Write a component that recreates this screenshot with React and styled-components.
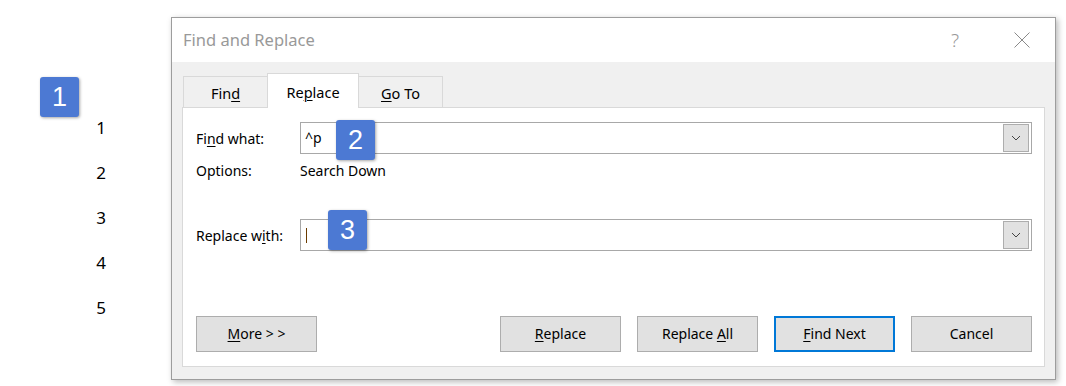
import * as React from 'react'
import styled, { createGlobalStyle } from 'styled-components'

const Global = createGlobalStyle`
  html, body {
    margin: 0;
    padding: 0;
    background: #fff;
  }
  body {
    font-family: 'Noto Sans', 'Open Sans', sans-serif;
    color: #000;
  }
`

const Page = styled.div`
  display: flex;
  align-items: flex-start;
  width: 1066px;
  height: 386px;
  padding-top: 17px;
  box-sizing: border-box;
  overflow: hidden;
`

const LeftCol = styled.div`
  position: relative;
  width: 171px;
  flex: none;
  height: 340px;
`

const Badge = styled.div`
  position: absolute;
  left: ${({ x }) => x}px;
  top: ${({ y }) => y}px;
  width: 39px;
  height: 40px;
  border-radius: 3px;
  background: #4c79d3;
  box-shadow: 1px 1px 3px rgba(0, 0, 0, 0.35);
  color: #fff;
  font-family: 'Liberation Sans', Arial, sans-serif;
  font-size: 27px;
  line-height: 40px;
  text-align: center;
  z-index: 2;
`

const NumList = styled.div`
  display: flex;
  flex-direction: column;
  margin: 89px 0 0 92px;
  width: 18px;
`

const Num = styled.div`
  height: 45px;
  line-height: 44px;
  text-align: center;
  font-size: 17px;
`

const Dialog = styled.div`
  width: 885px;
  height: 363px;
  box-sizing: border-box;
  border: 1px solid #9d9d9d;
  box-shadow: 2px 2px 6px rgba(0, 0, 0, 0.28);
  display: flex;
  flex-direction: column;
  background: #f0f0f0;
`

const TitleBar = styled.div`
  height: 44px;
  flex: none;
  background: #fff;
  display: flex;
  align-items: center;
  padding-left: 11px;
`

const Title = styled.div`
  flex: 1;
  font-size: 16.5px;
  color: #999;
  padding-bottom: 2px;
`

const Help = styled.div`
  width: 20px;
  text-align: center;
  color: #999;
  font-size: 19px;
  font-weight: 300;
  margin-right: 49px;
`

const Close = styled.div`
  width: 16px;
  height: 16px;
  margin-right: 25px;
  display: flex;
`

const Body = styled.div`
  flex: 1;
  display: flex;
  flex-direction: column;
  padding: 11px 10px 12px 10px;
`

const TabStrip = styled.div`
  display: flex;
  align-items: flex-end;
  padding-left: 1px;
  height: 35px;
  position: relative;
  z-index: 1;
  margin-bottom: -1px;
`

const Tab = styled.div`
  width: ${({ w }) => w}px;
  height: ${({ active }) => (active ? 35 : 32)}px;
  box-sizing: border-box;
  border: 1px solid #d9d9d9;
  border-bottom: ${({ active }) => (active ? 'none' : '1px solid #d9d9d9')};
  margin-left: ${({ active }) => (active ? '-1px' : '0')};
  margin-right: ${({ active }) => (active ? '-1px' : '0')};
  background: ${({ active }) => (active ? '#fff' : '#f0f0f0')};
  display: flex;
  align-items: center;
  justify-content: center;
  font-size: 14.5px;
  padding-top: 1px;
  position: relative;
  z-index: ${({ active }) => (active ? 2 : 1)};
`

const Panel = styled.div`
  flex: 1;
  background: #fff;
  border: 1px solid #d9d9d9;
  display: flex;
  flex-direction: column;
  padding: 14px 12px 14px 13px;
`

const Row = styled.div`
  display: flex;
  align-items: center;
  height: ${({ h }) => h}px;
  margin-top: ${({ mt }) => mt || 0}px;
`

const Label = styled.div`
  width: 104px;
  flex: none;
  font-size: 14px;
`

const Value = styled.div`
  font-size: 14px;
`

const Combo = styled.div`
  position: relative;
  flex: 1;
  height: 32px;
  box-sizing: border-box;
  border: 1px solid #a8a8a8;
  display: flex;
  align-items: center;
  padding: 0 2px 0 4px;
`

const ComboText = styled.div`
  flex: 1;
  font-size: 14px;
  padding-bottom: 2px;
`

const Caret = styled.div`
  width: 1px;
  height: 15px;
  background: #6b3b00;
  margin-left: 1px;
`

const DropBtn = styled.div`
  width: 26px;
  height: 28px;
  box-sizing: border-box;
  border: 1px solid #adadad;
  background: #e1e1e1;
  display: flex;
  align-items: center;
  justify-content: center;
`

const Spacer = styled.div`
  flex: 1;
`

const ButtonRow = styled.div`
  display: flex;
  gap: 16px;
`

const Button = styled.div`
  width: 121px;
  height: 36px;
  box-sizing: border-box;
  border: ${({ primary }) => (primary ? '2px solid #0078d7' : '1px solid #adadad')};
  background: #e1e1e1;
  display: flex;
  align-items: center;
  justify-content: center;
  font-size: 14px;
  padding-bottom: 1px;
  margin-right: ${({ push }) => (push ? 'auto' : '0')};
`

const U = styled.span`
  text-decoration: underline;
  text-underline-offset: 2px;
  text-decoration-thickness: 1px;
`

const Chevron = () => (
  <svg width="10" height="6" viewBox="0 0 10 6">
    <path d="M1 1 L5 5 L9 1" fill="none" stroke="#444" strokeWidth="1" />
  </svg>
)

const XIcon = () => (
  <svg width="16" height="16" viewBox="0 0 16 16">
    <path d="M0.5 0.5 L15.5 15.5 M15.5 0.5 L0.5 15.5" stroke="#8a8a8a" strokeWidth="1" fill="none" />
  </svg>
)

export default function App () {
  return (
    <>
      <Global />
      <Page>
        <LeftCol>
          <Badge x={40} y={60}>1</Badge>
          <NumList>
            {[1, 2, 3, 4, 5].map(n => <Num key={n}>{n}</Num>)}
          </NumList>
        </LeftCol>
        <Dialog>
          <TitleBar>
            <Title>Find and Replace</Title>
            <Help>?</Help>
            <Close><XIcon /></Close>
          </TitleBar>
          <Body>
            <TabStrip>
              <Tab w={85}><span>Fin<U>d</U></span></Tab>
              <Tab w={92} active><span>Re<U>p</U>lace</span></Tab>
              <Tab w={85}><span><U>G</U>o To</span></Tab>
            </TabStrip>
            <Panel>
              <Row h={32}>
                <Label>Fi<U>n</U>d what:</Label>
                <Combo>
                  <ComboText>^p</ComboText>
                  <DropBtn><Chevron /></DropBtn>
                  <Badge x={35} y={-3}>2</Badge>
                </Combo>
              </Row>
              <Row h={20} mt={6}>
                <Label>Options:</Label>
                <Value>Search Down</Value>
              </Row>
              <Row h={32} mt={39}>
                <Label>Replace w<U>i</U>th:</Label>
                <Combo>
                  <Caret />
                  <ComboText />
                  <DropBtn><Chevron /></DropBtn>
                  <Badge x={27} y={-10}>3</Badge>
                </Combo>
              </Row>
              <Spacer />
              <ButtonRow>
                <Button push><span><U>M</U>ore &gt; &gt;</span></Button>
                <Button><span><U>R</U>eplace</span></Button>
                <Button><span>Replace <U>A</U>ll</span></Button>
                <Button primary><span><U>F</U>ind Next</span></Button>
                <Button><span>Cancel</span></Button>
              </ButtonRow>
            </Panel>
          </Body>
        </Dialog>
      </Page>
    </>
  )
}
